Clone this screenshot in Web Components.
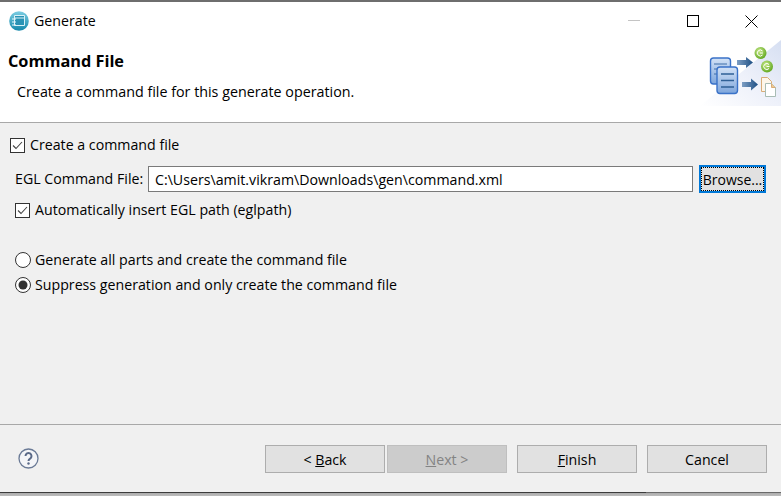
<!DOCTYPE html>
<html>
<head>
<meta charset="utf-8">
<title>Generate</title>
<style>
  html, body { margin: 0; height: 100%; background: #fff; }
  body { font: 14.2px/20px "Open Sans", "Noto Sans", sans-serif; color: #000; overflow: hidden; }
</style>
</head>
<body>
<wizard-dialog>
  <title-bar slot="title">Generate</title-bar>
  <wizard-header slot="header" heading="Command File">Create a command file for this generate operation.</wizard-header>

  <check-box checked style="margin:12px 0 0 10px">Create a command file</check-box>
  <file-row label="EGL Command File:" value="C:\Users\amit.vikram\Downloads\gen\command.xml"></file-row>
  <check-box checked style="margin:7px 0 0 15px">Automatically insert EGL path (eglpath)</check-box>
  <radio-button style="margin:31px 0 0 15px">Generate all parts and create the command file</radio-button>
  <radio-button checked style="margin:7px 0 0 15px">Suppress generation and only create the command file</radio-button>

  <button-bar slot="footer">
    <dlg-button key="B" pre="&lt; " post="ack"></dlg-button>
    <dlg-button key="N" post="ext &gt;" disabled style="margin-left:2px"></dlg-button>
    <dlg-button key="F" post="inish" style="margin-left:10px"></dlg-button>
    <dlg-button post="Cancel" style="margin-left:10px"></dlg-button>
  </button-bar>
</wizard-dialog>

<script>
const makeEl = (html) => {
  const t = document.createElement("template")
  t.innerHTML = html
  return t
}

class WizardDialog extends HTMLElement {
  constructor() {
    super()
    this.attachShadow({ mode: "open" }).appendChild(WizardDialog.tpl.content.cloneNode(true))
  }
}
WizardDialog.tpl = makeEl(`
<style>
  :host { display: flex; flex-direction: column; height: 496px; width: 781px; background: #f0f0f0; }
  #top { height: 122px; background: #fff; border-top: 2px solid #6e6e6e; box-sizing: border-box; flex: none; display: flex; flex-direction: column; }
  #body { flex: 1; border-top: 1px solid #a8a8a8; display: flex; flex-direction: column; min-height: 0; }
  #foot { flex: none; height: 68px; border-top: 1px solid #a8a8a8; box-sizing: border-box; }
  #edge { flex: none; height: 4px; background:
    linear-gradient(90deg, #3c3c3c 646px, #6a6a6a 646px) top / 100% 1px no-repeat,
    linear-gradient(#a6a6a6, #bdbdbd); }
</style>
<div id="top"><slot name="title"></slot><slot name="header"></slot></div>
<div id="body"><slot></slot></div>
<div id="foot"><slot name="footer"></slot></div>
<div id="edge"></div>`)
customElements.define("wizard-dialog", WizardDialog)

class TitleBar extends HTMLElement {
  constructor() {
    super()
    this.attachShadow({ mode: "open" }).appendChild(TitleBar.tpl.content.cloneNode(true))
  }
}
TitleBar.tpl = makeEl(`
<style>
  :host { display: flex; align-items: center; height: 38px; padding-left: 9px; flex: none; }
  svg { flex: none; display: block; }
  #name { margin-left: 5px; font-size: 14.2px; }
  #btns { margin-left: auto; display: flex; }
  .b { width: 59px; height: 38px; display: flex; align-items: center; justify-content: center; }
</style>
<svg width="20" height="20" viewBox="0 0 20 20">
  <defs><linearGradient id="g" x1="0" y1="0" x2="0" y2="1"><stop offset="0" stop-color="#7ccde2"/><stop offset="1" stop-color="#1488ab"/></linearGradient></defs>
  <circle cx="10" cy="10" r="9.800" fill="url(#g)"/>
  <path d="M5.500 4.500h10v10h-10z" fill="#2a93b5" stroke="#d9f1f7"/>
  <path d="M5.500 7h10" stroke="#d9f1f7"/>
  <path d="M3 8h4M3 11h4M3 14h4" stroke="#e8f7fb"/>
</svg>
<span id="name"><slot></slot></span>
<div id="btns">
  <div class="b"><svg width="12" height="12"><path d="M0 5.500h12" stroke="#c4c4c4"/></svg></div>
  <div class="b"><svg width="12" height="12"><rect x=".5" y=".5" width="11" height="11" fill="none" stroke="#000"/></svg></div>
  <div class="b"><svg width="13" height="13"><path d="M.5.5l12 12M12.500.5l-12 12" stroke="#000" fill="none"/></svg></div>
</div>`)
customElements.define("title-bar", TitleBar)

class WizardHeader extends HTMLElement {
  constructor() {
    super()
    this.attachShadow({ mode: "open" }).appendChild(WizardHeader.tpl.content.cloneNode(true))
    this.shadowRoot.querySelector("#h").textContent = this.getAttribute("heading")
  }
}
WizardHeader.tpl = makeEl(`
<style>
  :host { display: block; position: relative; flex: 1; padding: 10px 0 0 8px; }
  #h { font-weight: 700; font-size: 16.3px; line-height: 22px; }
  #d { margin: 10px 0 0 9px; line-height: 20px; font-size: 14.3px; }
  svg { position: absolute; right: 0; top: 0; display: block; }
</style>
<div id="h"></div>
<div id="d"><slot></slot></div>
<svg width="81" height="66" viewBox="0 0 81 66">
  <defs>
    <linearGradient id="bg" x1="0" y1="1" x2="1" y2="0"><stop offset="0" stop-color="#fff"/><stop offset=".5" stop-color="#eef1fa"/><stop offset="1" stop-color="#d6dff2"/></linearGradient>
    <linearGradient id="doc" x1="0" y1="0" x2="0" y2="1"><stop offset="0" stop-color="#d3e2f6"/><stop offset="1" stop-color="#7ea6dc"/></linearGradient>
    <radialGradient id="ball" cx=".4" cy=".35" r=".7"><stop offset="0" stop-color="#c9ea8c"/><stop offset="1" stop-color="#5da51c"/></radialGradient>
    <linearGradient id="arr" x1="0" y1="0" x2="1" y2="0"><stop offset="0" stop-color="#7d9ec4"/><stop offset="1" stop-color="#1d4f84"/></linearGradient>
  </defs>
  <path d="M0 66 L81 0 V66Z" fill="url(#bg)"/>
  <rect x="10.500" y="18" width="20" height="26" rx="3" fill="url(#doc)" stroke="#3a72c8" stroke-width="1.400"/>
  <path d="M14 24h13M14 29h13M14 34h13" stroke="#3f6ea8"/>
  <rect x="17" y="27" width="20.500" height="26.500" rx="3" fill="url(#doc)" stroke="#3a72c8" stroke-width="1.400"/>
  <path d="M21 34h13M21 40.500h13M21 47h13" stroke="#2f6096" stroke-width="1.300"/>
  <path d="M37 20h9v-3l7 5.500-7 5.500v-3h-9z" fill="url(#arr)"/>
  <path d="M42 42h9v-3.500l7 6-7 6v-3.500h-9z" fill="url(#arr)"/>
  <circle cx="60.500" cy="13" r="6" fill="url(#ball)"/>
  <circle cx="67" cy="26.500" r="6" fill="url(#ball)"/>
  <path d="M62.500 11a3 3 0 1 0 0 4M60 13h3M69 24.500a3 3 0 1 0 0 4M66.500 26.500h3" stroke="#fff" fill="none"/>
  <path d="M61.500 37.500h6l4 4v10h-10z" fill="#fdf6ea" stroke="#d8ac78"/>
  <path d="M65.500 43.500h6l4 4v9h-10z" fill="#fff" stroke="#a8bcb4"/>
  <path d="M71.500 43.500v4h4" fill="#f0c890" stroke="#d8ac78"/>
</svg>`)
customElements.define("wizard-header", WizardHeader)

class CheckBox extends HTMLElement {
  constructor() {
    super()
    this.attachShadow({ mode: "open" }).appendChild(CheckBox.tpl.content.cloneNode(true))
    if (!this.hasAttribute("checked")) this.shadowRoot.querySelector("path").remove()
  }
}
CheckBox.tpl = makeEl(`
<style>
  :host { display: flex; align-items: center; height: 20px; flex: none; }
  svg { flex: none; display: block; margin-right: 5px; }
</style>
<svg width="15" height="15"><rect x=".5" y=".5" width="14" height="14" fill="#fff" stroke="#333"/><path d="M3 7.500l3 3 6-6.500" fill="none" stroke="#444" stroke-width="1.100"/></svg>
<span><slot></slot></span>`)
customElements.define("check-box", CheckBox)

class RadioButton extends HTMLElement {
  constructor() {
    super()
    this.attachShadow({ mode: "open" }).appendChild(RadioButton.tpl.content.cloneNode(true))
    if (!this.hasAttribute("checked")) this.shadowRoot.querySelector("#dot").remove()
  }
}
RadioButton.tpl = makeEl(`
<style>
  :host { display: flex; align-items: center; height: 18px; flex: none; }
  svg { flex: none; display: block; margin-right: 4px; }
</style>
<svg width="16" height="16"><circle cx="8" cy="8" r="7.500" fill="#fff" stroke="#333"/><circle id="dot" cx="8" cy="8" r="4.500" fill="#333"/></svg>
<span><slot></slot></span>`)
customElements.define("radio-button", RadioButton)

class FileRow extends HTMLElement {
  constructor() {
    super()
    this.attachShadow({ mode: "open" }).appendChild(FileRow.tpl.content.cloneNode(true))
    this.shadowRoot.querySelector("#l").textContent = this.getAttribute("label")
    this.shadowRoot.querySelector("#v").textContent = this.getAttribute("value")
  }
}
FileRow.tpl = makeEl(`
<style>
  :host { display: flex; align-items: center; margin: 10px 0 0 15px; width: 751px; height: 28px; flex: none; }
  #l { width: 133px; flex: none; }
  #v { width: 545px; height: 26px; box-sizing: border-box; border: 1px solid #7a7a7a; background: #fff; line-height: 25px; padding-left: 6px; flex: none; }
  #b { margin-left: 6px; width: 67px; height: 28px; box-sizing: border-box; border: 2px solid #0078d7; background: #e1e1e1; flex: none; position: relative; display: flex; align-items: center; justify-content: center; padding-top: 1px; font-size: 14px; }
  #b::after { content: ""; position: absolute; inset: 0; border: 1px dotted #000; }
</style>
<span id="l"></span>
<div id="v"></div>
<div id="b">Browse...</div>`)
customElements.define("file-row", FileRow)

class ButtonBar extends HTMLElement {
  constructor() {
    super()
    this.attachShadow({ mode: "open" }).innerHTML = `
<style>
  :host { display: flex; align-items: flex-start; padding: 20px 14px 0 18px; }
  svg { display: block; margin-top: 3px; }
  #sp { flex: 1; }
</style>
<svg width="21" height="21" viewBox="0 0 21 21"><circle cx="10.500" cy="10.500" r="9.500" fill="#f4f5f8" stroke="#6a7a96" stroke-width="1.300"/><path d="M7.500 8a3 3 0 1 1 4.600 2.600c-1 .6-1.600 1.100-1.600 2.400" fill="none" stroke="#5a6a88" stroke-width="2"/><circle cx="10.500" cy="15.500" r="1.200" fill="#5a6a88"/></svg>
<div id="sp"></div>
<slot></slot>`
  }
}
customElements.define("button-bar", ButtonBar)

class DlgButton extends HTMLElement {
  constructor() {
    super()
    this.attachShadow({ mode: "open" }).appendChild(DlgButton.tpl.content.cloneNode(true))
    this.shadowRoot.querySelector("#a").textContent = this.getAttribute("pre") || ""
    this.shadowRoot.querySelector("u").textContent = this.getAttribute("key") || ""
    this.shadowRoot.querySelector("#c").textContent = this.getAttribute("post") || ""
  }
}
DlgButton.tpl = makeEl(`
<style>
  :host { display: flex; align-items: center; justify-content: center; width: 120px; height: 28px; box-sizing: border-box; border: 1px solid #adadad; background: #e1e1e1; flex: none; white-space: pre; padding-top: 1px; }
  :host([disabled]) { background: #cccccc; border-color: #bfbfbf; color: #838383; }
</style>
<span id="a"></span><u></u><span id="c"></span>`)
customElements.define("dlg-button", DlgButton)
</script>
</body>
</html>
